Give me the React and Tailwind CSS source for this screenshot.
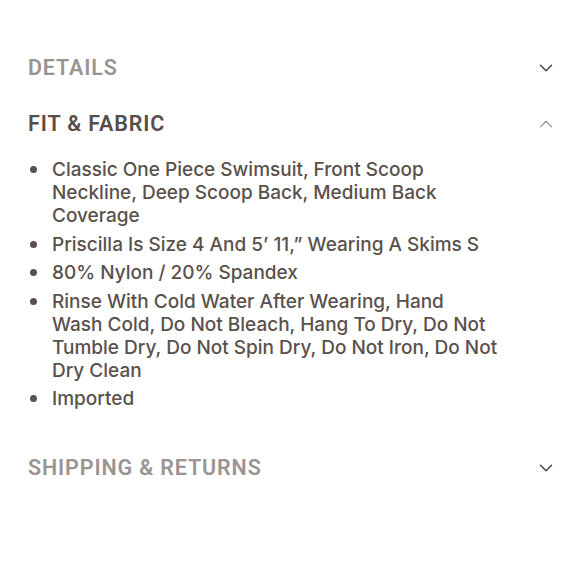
import { ChevronDown, ChevronUp } from "lucide-react";

const items = [
  "Classic One Piece Swimsuit, Front Scoop Neckline, Deep Scoop Back, Medium Back Coverage",
  "Priscilla Is Size 4 And 5\u2019 11,\u201d Wearing A Skims S",
  "80% Nylon / 20% Spandex",
  "Rinse With Cold Water After Wearing, Hand Wash Cold, Do Not Bleach, Hang To Dry, Do Not Tumble Dry, Do Not Spin Dry, Do Not Iron, Do Not Dry Clean",
  "Imported",
];

const headFont = { fontFamily: '"Roboto", "Liberation Sans", sans-serif' };

function Header({ title, open, dim }) {
  return (
    <div className="flex h-14 items-center justify-between">
      <span
        className={`text-[21.5px] font-semibold tracking-[0.04em] ${dim ? "text-[#9b9591]" : "text-[#574e49]"}`}
        style={headFont}
      >
        {title}
      </span>
      {open ? (
        <ChevronUp className="mr-[-5px] h-[22px] w-[22px] text-[#a29c98]" strokeWidth={1.4} />
      ) : (
        <ChevronDown className="mr-[-5px] h-[22px] w-[22px] text-[#4a4440]" strokeWidth={1.6} />
      )}
    </div>
  );
}

export default function App() {
  return (
    <div className="h-[580px] w-[580px] overflow-hidden bg-white px-7 pt-[40px]">
      <Header title="DETAILS" dim />
      <Header title="FIT & FABRIC" open />
      <ul
        className="mt-[6px] flex flex-col gap-[5.5px] text-[19px] font-medium leading-[23px] text-[#5a514c]"
        style={{ fontFamily: '"Inter", "Roboto", sans-serif' }}
      >
        {items.map((t) => (
          <li key={t} className="flex">
            <span className="mt-[8px] mr-[15px] ml-[2px] h-[7px] w-[7px] shrink-0 rounded-full bg-[#5a514c]" />
            <span className="max-w-[446px]">{t}</span>
          </li>
        ))}
      </ul>
      <div className="mt-[30px]">
        <Header title="SHIPPING & RETURNS" dim />
      </div>
    </div>
  );
}
